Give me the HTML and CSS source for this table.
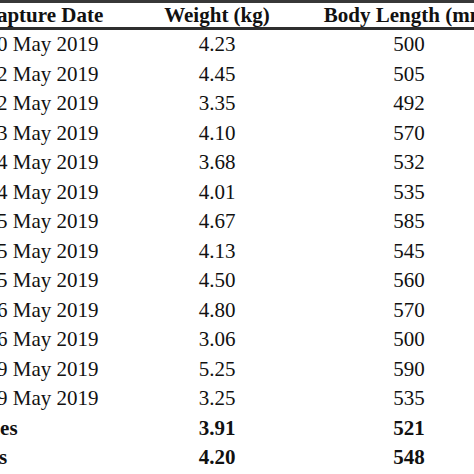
FILE: index.html
```html
<!DOCTYPE html>
<html lang="en">
<head>
<meta charset="utf-8">
<title>Capture data</title>
<link rel="stylesheet" href="styles.css">
</head>
<body>
<div class="frame">
  <div class="table">
    <div class="row head">
      <div class="c date">Capture Date</div>
      <div class="c">Weight (kg)</div>
      <div class="c">Body Length (mm)</div>
    </div>
    <div class="row"><div class="c date">10 May 2019</div><div class="c">4.23</div><div class="c">500</div></div>
    <div class="row"><div class="c date">12 May 2019</div><div class="c">4.45</div><div class="c">505</div></div>
    <div class="row"><div class="c date">12 May 2019</div><div class="c">3.35</div><div class="c">492</div></div>
    <div class="row"><div class="c date">13 May 2019</div><div class="c">4.10</div><div class="c">570</div></div>
    <div class="row"><div class="c date">14 May 2019</div><div class="c">3.68</div><div class="c">532</div></div>
    <div class="row"><div class="c date">14 May 2019</div><div class="c">4.01</div><div class="c">535</div></div>
    <div class="row"><div class="c date">15 May 2019</div><div class="c">4.67</div><div class="c">585</div></div>
    <div class="row"><div class="c date">15 May 2019</div><div class="c">4.13</div><div class="c">545</div></div>
    <div class="row"><div class="c date">15 May 2019</div><div class="c">4.50</div><div class="c">560</div></div>
    <div class="row"><div class="c date">16 May 2019</div><div class="c">4.80</div><div class="c">570</div></div>
    <div class="row"><div class="c date">16 May 2019</div><div class="c">3.06</div><div class="c">500</div></div>
    <div class="row"><div class="c date">19 May 2019</div><div class="c">5.25</div><div class="c">590</div></div>
    <div class="row"><div class="c date">19 May 2019</div><div class="c">3.25</div><div class="c">535</div></div>
    <div class="row sum"><div class="c label">Mean values</div><div class="c">3.91</div><div class="c">521</div></div>
    <div class="row sum"><div class="c label">Max values</div><div class="c">4.20</div><div class="c">548</div></div>
  </div>
</div>
</body>
</html>
```

FILE: styles.css
```css
html, body {
  margin: 0;
  padding: 0;
  background: #ffffff;
  overflow: hidden;
}

.frame {
  width: 474px;
  height: 474px;
  overflow: hidden;
}

.table {
  margin-left: -95px;
  width: 624px;
  font-family: "Liberation Serif", "Times New Roman", serif;
  font-size: 21px;
  color: #111111;
}

.row {
  display: grid;
  grid-template-columns: 35px 205px 144px 240px;
  height: 29.5px;
  line-height: 29.5px;
  white-space: nowrap;
}

.row.head {
  box-sizing: border-box;
  height: 30px;
  line-height: 24px;
  font-weight: bold;
  border-top: 3px solid #383838;
  border-bottom: 3px solid #2e2e2e;
}

.c {
  text-align: center;
}

.date {
  grid-column: 2;
}

.sum {
  font-weight: bold;
}

.label {
  grid-column: 1 / 3;
  text-align: left;
}
```
